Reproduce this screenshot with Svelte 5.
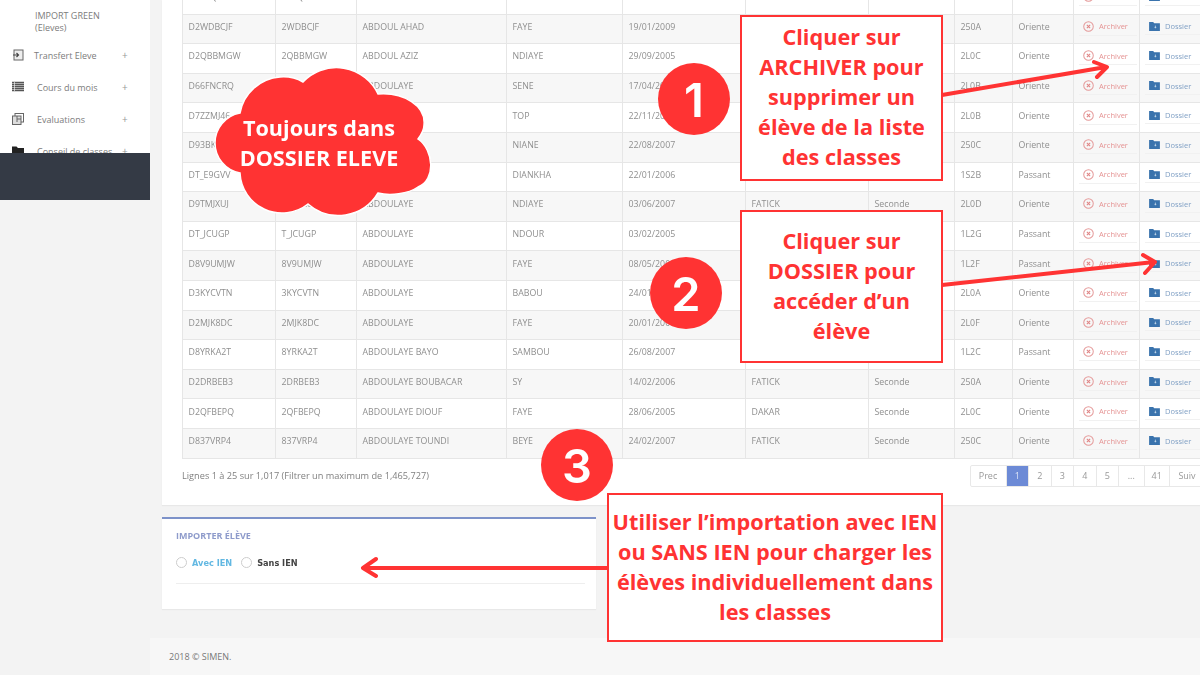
<script>
	const rows = [
		['D2BFQHTF', '2BFQHTF', 'ABDOUL AHAD', 'DIOUF', '12/02/2007', 'Fatick', 'Seconde', '1S2A', 'Oriente'],
		['D2WDBCJF', '2WDBCJF', 'ABDOUL AHAD', 'FAYE', '19/01/2009', 'FATICK', 'Seconde', '250A', 'Oriente'],
		['D2QBBMGW', '2QBBMGW', 'ABDOUL AZIZ', 'NDIAYE', '29/09/2005', 'FATICK', 'Seconde', '2L0C', 'Oriente'],
		['D66FNCRQ', '66FNCRQ', 'ABDOULAYE', 'SENE', '17/04/2006', 'FATICK', 'Seconde', '2L0B', 'Oriente'],
		['D7ZZMJ46', '7ZZMJ46', 'ABDOULAYE', 'TOP', '22/11/2006', 'FATICK', 'Seconde', '2L0B', 'Oriente'],
		['D93BKQ7R', '93BKQ7R', 'ABDOULAYE', 'NIANE', '22/08/2007', 'FATICK', 'Seconde', '250C', 'Oriente'],
		['DT_E9GVV', 'T_E9GVV', 'ABDOULAYE', 'DIANKHA', '22/01/2006', 'FATICK', 'Premiere', '1S2B', 'Passant'],
		['D9TMJXUJ', '9TMJXUJ', 'ABDOULAYE', 'NDIAYE', '03/06/2007', 'FATICK', 'Seconde', '2L0D', 'Oriente'],
		['DT_JCUGP', 'T_JCUGP', 'ABDOULAYE', 'NDOUR', '03/02/2005', 'FATICK', 'Premiere', '1L2G', 'Passant'],
		['D8V9UMJW', '8V9UMJW', 'ABDOULAYE', 'FAYE', '08/05/2006', 'FATICK', 'Premiere', '1L2F', 'Passant'],
		['D3KYCVTN', '3KYCVTN', 'ABDOULAYE', 'BABOU', '24/01/2007', 'FATICK', 'Seconde', '2L0A', 'Oriente'],
		['D2MJK8DC', '2MJK8DC', 'ABDOULAYE', 'FAYE', '20/01/2007', 'FATICK', 'Seconde', '2L0F', 'Oriente'],
		['D8YRKA2T', '8YRKA2T', 'ABDOULAYE BAYO', 'SAMBOU', '26/08/2007', 'FATICK', 'Premiere', '1L2C', 'Passant'],
		['D2DRBEB3', '2DRBEB3', 'ABDOULAYE BOUBACAR', 'SY', '14/02/2006', 'FATICK', 'Seconde', '250A', 'Oriente'],
		['D2QFBEPQ', '2QFBEPQ', 'ABDOULAYE DIOUF', 'FAYE', '28/06/2005', 'DAKAR', 'Seconde', '2L0C', 'Oriente'],
		['D837VRP4', '837VRP4', 'ABDOULAYE TOUNDI', 'BEYE', '24/02/2007', 'FATICK', 'Seconde', '250C', 'Oriente']
	];
	const pages = ['Prec', '1', '2', '3', '4', '5', '...', '41', 'Suiv'];
</script>

<div class="page">
	<div class="base">
		<aside class="sidebar">
			<nav class="menu">
				<div class="import">IMPORT GREEN<br />(Eleves)</div>
				<div class="item first">
					<svg viewBox="0 0 12 12" width="12" height="12">
						<rect x="2" y="1" width="9" height="10" fill="#eee" stroke="#666" stroke-width="1" />
						<path d="M1 6h5M4.500 4l2 2-2 2" fill="none" stroke="#444" stroke-width="1.200" />
					</svg>
					<span>Transfert Eleve</span><b>+</b>
				</div>
				<div class="item">
					<svg viewBox="0 0 12 12" width="12" height="12">
						<path d="M0 1.500h12M0 3.500h12M0 5.500h12M0 7.500h12M0 9.500h12" stroke="#555" stroke-width="1.300" />
						<path d="M2.500 1v9" stroke="#fff" stroke-width="0.600" />
					</svg>
					<span class="wide">Cours du mois</span><b>+</b>
				</div>
				<div class="item">
					<svg viewBox="0 0 12 12" width="12" height="12">
						<rect x="3" y="0.500" width="8.500" height="8.500" fill="none" stroke="#666" />
						<rect x="0.500" y="3" width="8.500" height="8.500" fill="#ddd" stroke="#666" />
						<path d="M5 3v6M5 6h4" stroke="#666" />
					</svg>
					<span class="wide">Evaluations</span><b>+</b>
				</div>
				<div class="item">
					<svg viewBox="0 0 12 12" width="12" height="12">
						<path d="M0 1.500h4.500l1.500 1.500h6v8h-12z" fill="#222" />
					</svg>
					<span class="wide">Conseil de classes</span><b>+</b>
				</div>
			</nav>
			<div class="dark"></div>
		</aside>

		<main class="main">
			<div class="content">
				<section class="card list">
					<table>
						<colgroup>
							<col style="width:93px" /><col style="width:81px" /><col style="width:150px" />
							<col style="width:116px" /><col style="width:123px" /><col style="width:123px" />
							<col style="width:86px" /><col style="width:58px" /><col style="width:61px" />
							<col style="width:66px" /><col style="width:62px" />
						</colgroup>
						<tbody>
							{#each rows as row}
								<tr>
									{#each row as cell}
										<td>{cell}</td>
									{/each}
									<td class="action">
										<span class="btn archive">
											<svg viewBox="0 0 12 12" width="11" height="11">
												<circle cx="6" cy="6" r="5.200" fill="none" stroke="#e59a9a" stroke-width="1.100" />
												<path d="M4.200 4.200l3.600 3.600M7.800 4.200l-3.600 3.600" stroke="#e08585" stroke-width="1.200" />
											</svg>
											Archiver
										</span>
									</td>
									<td class="action">
										<span class="btn folder">
											<svg viewBox="0 0 12 10" width="11" height="9">
												<path d="M0 0h4.500l1.200 1.300h6.300v8.700h-12z" fill="#3a73ad" />
												<path d="M7 4v3M6 6h2" stroke="#cfe0f0" stroke-width="0.800" />
											</svg>
											Dossier
										</span>
									</td>
								</tr>
							{/each}
						</tbody>
					</table>
					<div class="table-foot">
						<span>Lignes 1 à 25 sur 1,017 (Filtrer un maximum de 1,465,727)</span>
						<div class="pager">
							{#each pages as p}
								<span class:active={p === '1'} class:edge={p === 'Prec' || p === 'Suiv'} class:gap={p === '...' || p === '41'}>{p}</span>
							{/each}
						</div>
					</div>
				</section>

				<section class="card import-card">
					<h4>IMPORTER ÉLÈVE</h4>
					<div class="radios">
						<i></i><label class="on">Avec IEN</label>
						<i></i><label>Sans IEN</label>
					</div>
					<hr />
				</section>
			</div>
			<footer>2018 © SIMEN.</footer>
		</main>
	</div>

	<!-- annotations posees sur la capture -->
	<svg class="arrows" viewBox="0 0 1200 675" width="1200" height="675">
		<g fill="none" stroke="#ff3333" stroke-width="4" stroke-linecap="round" stroke-linejoin="round">
			<path d="M942 95L1106 67M1094 62L1107 67L1097 77" />
			<path d="M942 285L1154 262M1143 255L1155 262L1145 273" />
			<path d="M608 568H363M376 559L363 568L376 576" />
		</g>
		<path
			class="cloud"
			d="M240 113A44 44 0 0 1 280 77A40 40 0 0 1 303 82A46 46 0 0 1 378 94C404 92 426 106 424 125C424 130 421 135 418 139C434 150 436 180 418 187C408 194 390 196 378 193A46 46 0 0 1 308 204A42 42 0 0 1 240 173A30.500 30.500 0 0 1 240 113Z"
		/>
	</svg>

	<div class="cloud-text">Toujours dans<br />DOSSIER ELEVE</div>

	<div class="bubble b1">1</div>
	<div class="bubble b2">2</div>
	<div class="bubble b3">3</div>

	<div class="note n1">Cliquer sur<br />ARCHIVER pour<br />supprimer un<br />élève de la liste<br />des classes</div>
	<div class="note n2">Cliquer sur<br />DOSSIER pour<br />accéder d’un<br />élève</div>
	<div class="note n3">Utiliser l’importation avec IEN<br />ou SANS IEN pour charger les<br />élèves individuellement dans<br />les classes</div>
</div>

<style>
	:global(body) {
		margin: 0;
		background: #f3f3f3;
	}
	.page {
		position: relative;
		width: 1200px;
		height: 675px;
		overflow: hidden;
		font-family: "Open Sans", sans-serif;
	}
	.base {
		display: grid;
		grid-template-columns: 150px 1fr;
		height: 675px;
		color: #8f8f8f;
		filter: blur(0.7px);
	}

	/* sidebar */
	.menu {
		height: 153px;
		overflow: hidden;
		background: #fff;
		font-size: 9px;
		color: #7c7c7c;
	}
	.import {
		padding: 10px 0 0 35px;
		line-height: 12px;
	}
	.item {
		display: flex;
		align-items: center;
		height: 32px;
		padding-left: 12px;
	}
	.item.first {
		margin-top: 5px;
	}
	.item span {
		margin-left: 10px;
		width: 88px;
	}
	.item span.wide {
		margin-left: 13px;
		width: 85px;
	}
	.item b {
		font-weight: 400;
		font-size: 10px;
		color: #999;
	}
	.dark {
		height: 47px;
		background: #343a45;
	}

	/* contenu */
	.main {
		display: flex;
		flex-direction: column;
		min-width: 0;
	}
	.content {
		flex: 1;
		padding-left: 12px;
		overflow: hidden;
	}
	.card {
		background: #fff;
		box-shadow: 0 1px 1px #e8e8e8;
	}
	.list {
		height: 505px;
		padding-left: 20px;
		overflow: hidden;
	}
	table {
		width: 1019px;
		margin-top: -16px;
		border-collapse: collapse;
		table-layout: fixed;
		font-size: 8.800px;
	}
	tr {
		height: 29.6px;
	}
	tr:nth-child(even) {
		background: #f7f7f7;
	}
	td {
		padding: 0 0 4px 5.500px;
		border: 1px solid #e6e6e6;
		white-space: nowrap;
		overflow: hidden;
	}
	td.action {
		padding: 0 0 3px 5px;
	}
	.btn {
		display: flex;
		align-items: center;
		gap: 5px;
		width: 54px;
		padding: 2px 0 3px 4px;
		font-size: 7.500px;
		border-bottom: 1px solid #f1f1f1;
	}
	.archive {
		color: #e59393;
	}
	.folder {
		color: #7f9fc4;
		gap: 5px;
	}
	.table-foot {
		display: flex;
		justify-content: space-between;
		align-items: center;
		margin-top: 6px;
		font-size: 9.200px;
		color: #808080;
	}
	.pager {
		display: flex;
		height: 22px;
		margin-right: -5px;
		border: 1px solid #e8e8e8;
		border-radius: 2px;
		box-sizing: border-box;
	}
	.pager span {
		display: flex;
		align-items: center;
		justify-content: center;
		box-sizing: border-box;
		width: 22.500px;
		border-left: 1px solid #e8e8e8;
		color: #999;
		font-size: 9px;
	}
	.pager span:first-child {
		border-left: 0;
	}
	.pager .edge {
		width: 35px;
	}
	.pager .gap {
		width: 25.500px;
	}
	.pager .active {
		background: #6c8ad6;
		color: #dfe6f7;
	}

	.import-card {
		box-sizing: border-box;
		width: 434px;
		height: 92px;
		margin-top: 12px;
		padding: 11px 11px 0 14px;
		border-top: 2px solid #7d92c9;
	}
	.import-card h4 {
		margin: 0;
		font-size: 9px;
		font-weight: 700;
		line-height: 12px;
		color: #8e9bcb;
	}
	.radios {
		display: flex;
		align-items: center;
		gap: 5px;
		margin-top: 15px;
		font-family: "DejaVu Sans", sans-serif;
		font-size: 8.200px;
		font-weight: 700;
		color: #444;
	}
	.radios i {
		width: 9px;
		height: 9px;
		border: 1px solid #ccc;
		border-radius: 50%;
	}
	.radios .on {
		color: #62b8e2;
		margin-right: 4px;
	}
	.import-card hr {
		margin: 15px 0 0;
		border: 0;
		border-top: 1px solid #eee;
	}
	footer {
		flex: none;
		height: 37px;
		padding-left: 19px;
		background: #f7f7f7;
		font-size: 9px;
		line-height: 38px;
		color: #777;
	}

	/* annotations */
	.arrows {
		position: absolute;
		inset: 0;
	}
	.cloud {
		fill: #ff3333;
		stroke: #fff;
		stroke-width: 1.500;
	}
	.cloud-text {
		position: absolute;
		left: 208px;
		top: 113px;
		width: 222px;
		text-align: center;
		font-size: 21.600px;
		font-weight: 700;
		line-height: 30px;
		color: #fff;
	}
	.bubble {
		position: absolute;
		display: flex;
		align-items: center;
		justify-content: center;
		width: 72px;
		height: 72px;
		border-radius: 50%;
		background: #ff3333;
		color: #fff;
		font-family: Inter, sans-serif;
		font-size: 47px;
		font-weight: 600;
	}
	.b1 { left: 658px; top: 63px; }
	.b2 { left: 650px; top: 257px; }
	.b3 { left: 541px; top: 429px; }
	.note {
		position: absolute;
		box-sizing: border-box;
		display: flex;
		align-items: center;
		justify-content: center;
		text-align: center;
		padding-bottom: 2px;
		background: #fff;
		border: 2px solid #ff3333;
		color: #ff3333;
		font-size: 21.700px;
		font-weight: 700;
		line-height: 30px;
	}
	.n1 { left: 740px; top: 15px; width: 203px; height: 166px; }
	.n2 { left: 740px; top: 210px; width: 203px; height: 153px; }
	.n3 { left: 607px; top: 493px; width: 336px; height: 149px; }
</style>
